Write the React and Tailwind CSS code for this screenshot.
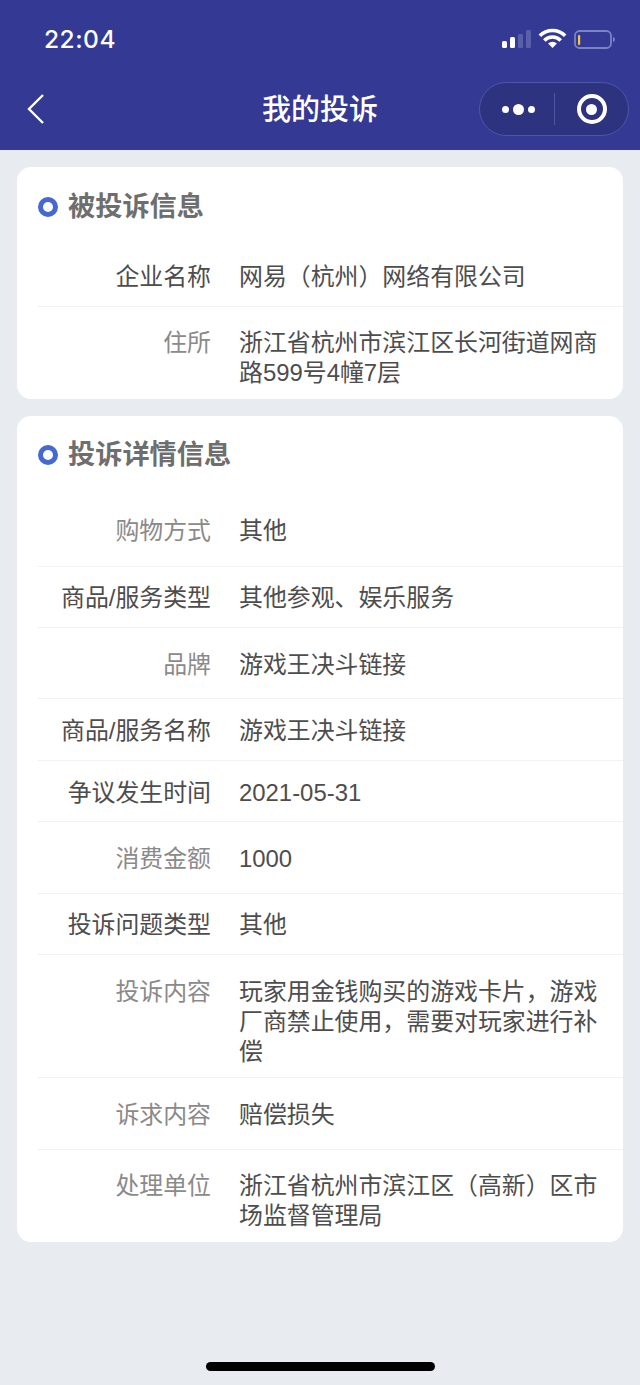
const font = '"Liberation Sans", "Noto Sans CJK SC", sans-serif'

const basicRows = [
  { label: '企业名称', value: '网易（杭州）网络有限公司', dark: true, cls: 'pt-[16px] pb-[14px]' },
  { label: '住所', value: '浙江省杭州市滨江区长河街道网商路599号4幢7层', cls: 'pt-[21px] pb-[11px]' },
]

const detailRows = [
  { label: '购物方式', value: '其他', cls: 'pt-[21px] pb-[20px]' },
  { label: '商品/服务类型', value: '其他参观、娱乐服务', dark: true, cls: 'pt-[16px] pb-[14px]' },
  { label: '品牌', value: '游戏王决斗链接', cls: 'pt-[22px] pb-[18px]' },
  { label: '商品/服务名称', value: '游戏王决斗链接', dark: true, cls: 'pt-[17px] pb-[14px]' },
  { label: '争议发生时间', value: '2021-05-31', dark: true, cls: 'pt-[17px] pb-[13px]' },
  { label: '消费金额', value: '1000', cls: 'pt-[22px] pb-[19px]' },
  { label: '投诉问题类型', value: '其他', dark: true, cls: 'pt-[16px] pb-[14px]' },
  { label: '投诉内容', value: '玩家用金钱购买的游戏卡片，游戏厂商禁止使用，需要对玩家进行补偿', cls: 'pt-[22px] pb-[10px]' },
  { label: '诉求内容', value: '赔偿损失', cls: 'pt-[22px] pb-[19px]' },
  { label: '处理单位', value: '浙江省杭州市滨江区（高新）区市场监督管理局', cls: 'pt-[21px] pb-[11px]' },
]

function Row({ label, value, dark, cls, last }) {
  return (
    <div className={`flex gap-[28px] text-[23.9px] leading-[30px] ${cls} ${last ? '' : 'border-b border-[#f1f2f4]'}`}>
      <div className={`w-[173px] shrink-0 text-right ${dark ? 'text-[#4d4d4d]' : 'text-[#8a8a8a]'}`}>{label}</div>
      <div className="flex-1 pr-[21px] text-[#4d4d4d]">{value}</div>
    </div>
  )
}

function Card({ title, rows, titleCls, listCls }) {
  return (
    <div className="bg-white rounded-[14px] pl-[21px]">
      <div className={`flex items-center gap-[10px] ${titleCls}`}>
        <div className="w-[20px] h-[20px] rounded-full border-[5px] border-[#4668d3]" />
        <div className="text-[27.2px] leading-[38px] font-bold text-[#6e6e6e]">{title}</div>
      </div>
      <div className={listCls}>
        {rows.map((r, i) => (
          <Row key={r.label} {...r} last={i === rows.length - 1} />
        ))}
      </div>
    </div>
  )
}

export default function App() {
  return (
    <div className="relative h-[1385px] w-[640px] overflow-hidden bg-[#e8ebf0]" style={{ fontFamily: font }}>
      <div className="bg-[#343a94] h-[150px] text-white">
        <div className="flex items-center justify-between h-[78px] pl-[44px] pr-[24px]">
          <span className="text-[24.5px] font-medium tracking-[0.5px]" style={{ fontFamily: 'Inter, sans-serif' }}>22:04</span>
          <svg width="116" height="22" viewBox="0 0 116 22">
            <rect x="2" y="13" width="5" height="7" rx="1.5" fill="#fff" />
            <rect x="10" y="9" width="5" height="11" rx="1.5" fill="#fff" />
            <rect x="18" y="6" width="5" height="14" rx="1.5" fill="#5a60a8" />
            <rect x="26" y="2" width="5" height="18" rx="1.5" fill="#5a60a8" />
            <path d="M39.8 7.8a18 18 0 0 1 25.4 0" fill="none" stroke="#fff" strokeWidth="3.6" />
            <path d="M44.3 12.4a11.6 11.6 0 0 1 16.4 0" fill="none" stroke="#fff" strokeWidth="3.6" />
            <path d="M52.5 20l-4.4-4.4a6.2 6.2 0 0 1 8.8 0z" fill="#fff" />
            <rect x="75" y="3" width="36" height="17" rx="4.5" fill="none" stroke="#7d82c4" strokeWidth="1.8" />
            <rect x="78" y="7" width="2.2" height="10" rx="1" fill="#f0c93f" />
            <path d="M113 9c2.6 .5 2.6 4.5 0 5z" fill="#7d82c4" />
          </svg>
        </div>
        <div className="relative flex items-center justify-center h-[62px]">
          <svg className="absolute left-[25px] top-[15px]" width="20" height="32" viewBox="0 0 20 32">
            <path d="M18 2L4 16l14 14" fill="none" stroke="#fff" strokeWidth="2.4" />
          </svg>
          <span className="text-[29px] leading-[40px] font-medium pt-[2px]">我的投诉</span>
          <div className="absolute left-[479px] top-[4px] w-[150px] h-[54px] flex items-center rounded-full bg-[#2e3380] border border-[#4f55a6]">
            <div className="w-[74px] flex items-center justify-center gap-[4px] pl-[3px]">
              <span className="w-[7px] h-[7px] rounded-full bg-white" />
              <span className="w-[11px] h-[11px] rounded-full bg-white" />
              <span className="w-[7px] h-[7px] rounded-full bg-white" />
            </div>
            <div className="w-px h-[32px] bg-[#4f55a6]" />
            <div className="flex-1 flex items-center justify-center">
              <div className="w-[30px] h-[30px] rounded-full border-[4px] border-white flex items-center justify-center">
                <span className="w-[11px] h-[11px] rounded-full bg-white" />
              </div>
            </div>
          </div>
        </div>
      </div>

      <div className="flex flex-col gap-[17px] pt-[17px] px-[17px]">
        <Card title="被投诉信息" rows={basicRows} titleCls="pt-[21px]" listCls="pt-[20px]" />
        <Card title="投诉详情信息" rows={detailRows} titleCls="pt-[20px]" listCls="pt-[21px]" />
      </div>

      <div className="absolute left-[206px] top-[1362px] w-[229px] h-[9px] rounded-full bg-black" />
    </div>
  )
}
